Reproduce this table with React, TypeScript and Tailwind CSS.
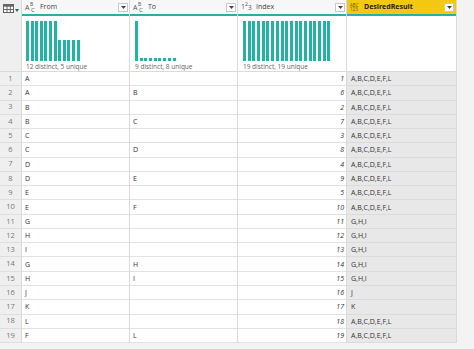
import React from 'react'

type Row = { from: string; to: string; index: number; result: string }

const ABCF = 'A,B,C,D,E,F,L'
const GHI = 'G,H,I'

const rows: Row[] = [
    { from: 'A', to: '', index: 1, result: ABCF },
    { from: 'A', to: 'B', index: 6, result: ABCF },
    { from: 'B', to: '', index: 2, result: ABCF },
    { from: 'B', to: 'C', index: 7, result: ABCF },
    { from: 'C', to: '', index: 3, result: ABCF },
    { from: 'C', to: 'D', index: 8, result: ABCF },
    { from: 'D', to: '', index: 4, result: ABCF },
    { from: 'D', to: 'E', index: 9, result: ABCF },
    { from: 'E', to: '', index: 5, result: ABCF },
    { from: 'E', to: 'F', index: 10, result: ABCF },
    { from: 'G', to: '', index: 11, result: GHI },
    { from: 'H', to: '', index: 12, result: GHI },
    { from: 'I', to: '', index: 13, result: GHI },
    { from: 'G', to: 'H', index: 14, result: GHI },
    { from: 'H', to: 'I', index: 15, result: GHI },
    { from: 'J', to: '', index: 16, result: 'J' },
    { from: 'K', to: '', index: 17, result: 'K' },
    { from: 'L', to: '', index: 18, result: ABCF },
    { from: 'F', to: 'L', index: 19, result: ABCF },
]

function DropBtn() {
    return (
        <div className='w-[10px] h-[9px] bg-white border border-[#c8c8c8] flex items-center justify-center'>
            <svg width='5' height='3' viewBox='0 0 5 3'>
                <path d='M0 0 L5 0 L2.5 3 Z' fill='#444' />
            </svg>
        </div>
    )
}

function AbcIcon() {
    return (
        <span className='flex items-center text-[#555] leading-none w-[13px] h-[11px]'>
            <span className='text-[7px]'>A</span>
            <span className='flex flex-col leading-none ml-[0.5px]'>
                <span className='text-[5px]'>B</span>
                <span className='text-[6px] ml-[1px]'>C</span>
            </span>
        </span>
    )
}

function Bars({ heights, gap }: { heights: number[]; gap: string }) {
    return (
        <div className={`flex items-end h-[40px] ${gap}`}>
            {heights.map((h, i) => (
                <div key={i} className='w-[3px] bg-[#22b3a5]' style={{ height: h }} />
            ))}
        </div>
    )
}

export default function App() {
    const font = { fontFamily: '"Open Sans", "Noto Sans", sans-serif' }
    return (
        <div className='w-[474px] h-[349px] bg-[#f3f3f3] overflow-hidden text-[#333]' style={font}>
            <div className='flex w-[457px]'>
                {/* row number column */}
                <div className='w-[22px] shrink-0 bg-[#efefef] border-r border-[#dadada]'>
                    <div className='h-[16px] flex items-center pl-[3px] gap-[1px]'>
                        <svg width='11' height='9' viewBox='0 0 11 9'>
                            <rect x='0.5' y='0.5' width='10' height='8' fill='#fff' stroke='#666' />
                            <rect x='0.5' y='0.5' width='10' height='2.2' fill='#666' />
                            <line x1='0.5' y1='5.5' x2='10.5' y2='5.5' stroke='#666' />
                            <line x1='4' y1='0.5' x2='4' y2='8.5' stroke='#666' />
                            <line x1='7.3' y1='0.5' x2='7.3' y2='8.5' stroke='#666' />
                        </svg>
                        <svg width='4' height='3' viewBox='0 0 4 3' className='mt-[5px]'>
                            <path d='M0 0 L4 0 L2 3 Z' fill='#555' />
                        </svg>
                    </div>
                    <div className='h-[56px] border-b border-[#dadada]' />
                    {rows.map((r, i) => (
                        <div key={i} className='h-[14.28px] border-b border-[#dedede] flex items-center justify-center text-[7.5px] text-[#777] leading-none'>
                            {i + 1}
                        </div>
                    ))}
                </div>

                {/* From */}
                <div className='w-[108px] shrink-0 border-r border-[#dadada] bg-white'>
                    <div className='h-[14px] bg-[#f7f7f7] flex items-center pl-[3px] pr-[1px] gap-[2px]'>
                        <AbcIcon />
                        <span className='text-[7px] text-[#444] flex-1'>From</span>
                        <DropBtn />
                    </div>
                    <div className='h-[2px] bg-[#22b3a5]' />
                    <div className='h-[56px] border-b border-[#dadada] pl-[4px] pt-[5px]'>
                        <Bars heights={[40, 40, 40, 40, 40, 40, 40, 21, 21, 21, 21, 21]} gap='gap-[1.6px]' />
                        <div className='text-[6.5px] text-[#666] leading-none mt-[3px]'>12 distinct, 5 unique</div>
                    </div>
                    {rows.map((r, i) => (
                        <div key={i} className='h-[14.28px] border-b border-[#e2e2e2] flex items-center pl-[3px] text-[7px] leading-none'>
                            {r.from}
                        </div>
                    ))}
                </div>

                {/* To */}
                <div className='w-[108px] shrink-0 border-r border-[#dadada] bg-white'>
                    <div className='h-[14px] bg-[#f7f7f7] flex items-center pl-[3px] pr-[1px] gap-[2px]'>
                        <AbcIcon />
                        <span className='text-[7px] text-[#444] flex-1'>To</span>
                        <DropBtn />
                    </div>
                    <div className='h-[2px] bg-[#22b3a5]' />
                    <div className='h-[56px] border-b border-[#dadada] pl-[5px] pt-[5px]'>
                        <Bars heights={[40, 3, 3, 3, 3, 3, 3, 3, 3]} gap='gap-[1.7px]' />
                        <div className='text-[6.5px] text-[#666] leading-none mt-[3px]'>9 distinct, 8 unique</div>
                    </div>
                    {rows.map((r, i) => (
                        <div key={i} className='h-[14.28px] border-b border-[#e2e2e2] flex items-center pl-[3px] text-[7px] leading-none'>
                            {r.to}
                        </div>
                    ))}
                </div>

                {/* Index */}
                <div className='w-[109px] shrink-0 border-r border-[#dadada] bg-white'>
                    <div className='h-[14px] bg-[#f7f7f7] flex items-center pl-[3px] pr-[1px] gap-[3px]'>
                        <span className='flex items-start text-[#555] leading-none w-[12px] h-[10px]'>
                            <span className='text-[7px] mt-[1px]'>1</span>
                            <span className='text-[5px]'>2</span>
                            <span className='text-[6.5px] mt-[3px]'>3</span>
                        </span>
                        <span className='text-[7px] text-[#444] flex-1'>Index</span>
                        <DropBtn />
                    </div>
                    <div className='h-[2px] bg-[#22b3a5]' />
                    <div className='h-[56px] border-b border-[#dadada] pl-[5px] pt-[5px]'>
                        <Bars heights={Array.from({ length: 19 }, () => 40)} gap='gap-[1.7px]' />
                        <div className='text-[6.5px] text-[#666] leading-none mt-[3px]'>19 distinct, 19 unique</div>
                    </div>
                    {rows.map((r, i) => (
                        <div key={i} className='h-[14.28px] border-b border-[#e2e2e2] flex items-center justify-end pr-[2px] text-[7px] italic leading-none'>
                            {r.index}
                        </div>
                    ))}
                </div>

                {/* DesiredResult */}
                <div className='w-[110px] shrink-0 border-r border-[#dadada] bg-white'>
                    <div className='h-[14px] bg-[#f2c811] flex items-center pl-[3px] pr-[2px] gap-[3px]'>
                        <span className='flex flex-col text-[#6b5a00] leading-none w-[11px] text-[4.5px]'>
                            <span>ABC</span>
                            <span>123</span>
                        </span>
                        <span className='text-[7px] text-[#222] font-bold flex-1'>DesiredResult</span>
                        <DropBtn />
                    </div>
                    <div className='h-[2px] bg-[#22b3a5]' />
                    <div className='h-[56px] border-b border-[#dadada]' />
                    {rows.map((r, i) => (
                        <div key={i} className='h-[14.28px] bg-[#e8e8e8] border-b border-[#dcdcdc] flex items-center pl-[4px] text-[7px] leading-none'>
                            {r.result}
                        </div>
                    ))}
                </div>
            </div>
        </div>
    )
}
